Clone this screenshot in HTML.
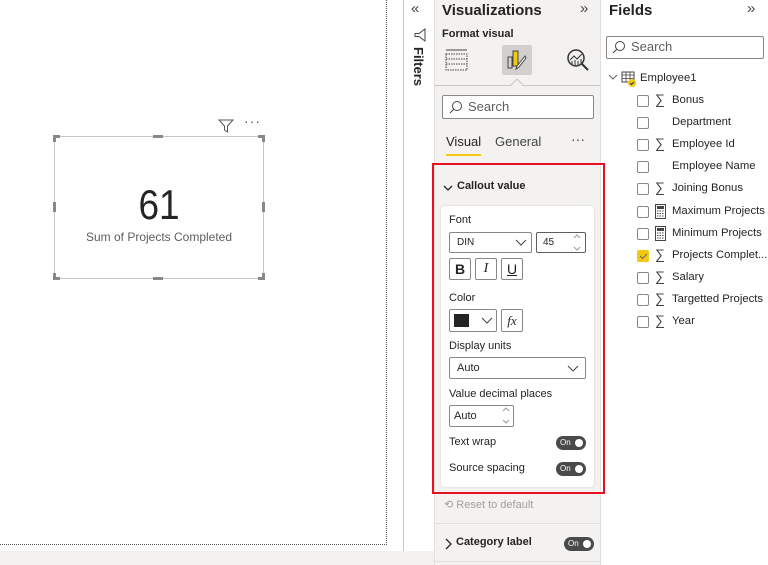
<!DOCTYPE html>
<html><head><meta charset="utf-8"><style>
*{box-sizing:border-box;margin:0;padding:0}
body{width:768px;height:565px;overflow:hidden;background:#fff;font-family:"Segoe UI","Liberation Sans",sans-serif;color:#252423;position:relative;font-size:12px}
.abs{position:absolute}
.cb{position:absolute;width:12px;height:12px;border:1px solid #8a8886;border-radius:2px;background:#fff}
.sig{position:absolute;font-size:14px;color:#444}
.fl{position:absolute;font-size:11.3px;color:#252423;white-space:nowrap}
.tog{position:absolute;width:30px;height:14px;border-radius:7px;background:#4a4a4a;color:#fff;font-size:8px;line-height:14px;padding-left:4px}
.tog:after{content:"";position:absolute;right:3px;top:3px;width:8px;height:8px;border-radius:50%;background:#fff}
.box{position:absolute;border:1px solid #8a8886;border-radius:2px;background:#fff}
.h{position:absolute;background:#8a8886}
</style></head><body>
<div class="abs" style="left:0;top:0;width:387px;height:545px;border-right:1px dotted #555;border-bottom:1px dotted #555"></div>
<div class="abs" style="left:0;top:551px;width:434px;height:14px;background:#f3f2f1"></div>
<div class="abs" style="left:403px;top:0;width:1px;height:551px;background:#c8c6c4"></div>
<div class="abs" style="left:54px;top:136px;width:210px;height:143px;border:1px solid #c8c6c4"></div>
<div class="h" style="left:53px;top:135px;width:7px;height:3px"></div><div class="h" style="left:53px;top:135px;width:3px;height:7px"></div>
<div class="h" style="left:258px;top:135px;width:7px;height:3px"></div><div class="h" style="left:262px;top:135px;width:3px;height:7px"></div>
<div class="h" style="left:53px;top:277px;width:7px;height:3px"></div><div class="h" style="left:53px;top:273px;width:3px;height:7px"></div>
<div class="h" style="left:258px;top:277px;width:7px;height:3px"></div><div class="h" style="left:262px;top:273px;width:3px;height:7px"></div>
<div class="h" style="left:153px;top:135px;width:10px;height:3px"></div><div class="h" style="left:153px;top:277px;width:10px;height:3px"></div>
<div class="h" style="left:53px;top:202px;width:3px;height:10px"></div><div class="h" style="left:262px;top:202px;width:3px;height:10px"></div>
<svg class="abs" style="left:218px;top:119px" width="16" height="14"><path d="M1 1H15L9.5 7V13L6.5 11V7Z" fill="none" stroke="#555" stroke-width="1"/></svg>
<div class="abs" style="left:244px;top:113px;font-size:14px;color:#555;letter-spacing:1px">···</div>
<div class="abs" style="left:54px;top:180px;width:210px;text-align:center;font-size:42px;line-height:50px;color:#252423;transform:scaleX(.88)">61</div>
<div class="abs" style="left:54px;top:230px;width:210px;text-align:center;font-size:12px;color:#605e5c">Sum of Projects Completed</div>
<div class="abs" style="left:411px;top:0;font-size:15px;color:#444">«</div>
<svg class="abs" style="left:413px;top:28px" width="14" height="14"><path d="M12 1V13L6 8.5H2V5.5H6Z" fill="none" stroke="#444"/></svg>
<div class="abs" style="left:411px;top:47px;writing-mode:vertical-rl;font-size:13px;font-weight:bold;color:#252423">Filters</div>
<div class="abs" style="left:434px;top:0;width:167px;height:565px;background:#f3f2f1;border-left:1px solid #e1dfdd;border-right:1px solid #e1dfdd"></div>
<div class="abs" style="left:442px;top:2px;font-size:15px;font-weight:600">Visualizations</div>
<div class="abs" style="left:580px;top:0;font-size:15px;color:#444">»</div>
<div class="abs" style="left:442px;top:28px;font-size:11px;font-weight:600">Format visual</div>
<svg class="abs" style="left:445px;top:48px" width="24" height="24"><rect x="1" y="6" width="21" height="16" fill="none" stroke="#444" stroke-dasharray="1.5 1"/><line x1="1" y1="2" x2="22" y2="2" stroke="#444"/><line x1="1" y1="11" x2="22" y2="11" stroke="#444" stroke-dasharray="1.5 1"/><line x1="1" y1="16" x2="22" y2="16" stroke="#444" stroke-dasharray="1.5 1"/></svg>
<div class="abs" style="left:502px;top:45px;width:30px;height:30px;background:#d2d0ce;border-radius:2px"></div>
<svg class="abs" style="left:505px;top:48px" width="24" height="24"><path d="M3 9H7V20H3Z" fill="none" stroke="#444"/><rect x="8" y="3" width="5" height="15" fill="#f2c811" stroke="#444"/><path d="M20 8L12 18L11 21L14 19L21 10Z" fill="#fff" stroke="#444"/></svg>
<svg class="abs" style="left:566px;top:48px" width="26" height="26"><circle cx="10" cy="10" r="8" fill="none" stroke="#333" stroke-width="1.5"/><path d="M4 12L8 8L11 11L16 6" fill="none" stroke="#333"/><path d="M6 13V17M9 12V18M12 13V18M15 11V16" stroke="#333"/><line x1="16" y1="16" x2="22" y2="22" stroke="#333" stroke-width="2"/></svg>
<div class="abs" style="left:435px;top:85px;width:165px;height:1px;background:#c8c6c4"></div>
<svg class="abs" style="left:510px;top:79px" width="14" height="8"><path d="M0 7L7 0L14 7" fill="#f3f2f1" stroke="#c8c6c4"/></svg>
<div class="box" style="left:442px;top:95px;width:152px;height:24px"></div>
<svg class="abs" style="left:449px;top:100px" width="14" height="14"><circle cx="8" cy="6" r="4.5" fill="none" stroke="#444"/><line x1="5" y1="9" x2="1" y2="13" stroke="#444"/></svg>
<div class="abs" style="left:468px;top:99px;font-size:13px;color:#605e5c">Search</div>
<div class="abs" style="left:446px;top:134px;font-size:13px">Visual</div>
<div class="abs" style="left:446px;top:154px;width:35px;height:2px;background:#f2c811"></div>
<div class="abs" style="left:495px;top:134px;font-size:13px;color:#444">General</div>
<div class="abs" style="left:571px;top:131px;font-size:14px;color:#444">···</div>
<div class="abs" style="left:432px;top:163px;width:173px;height:331px;border:2px solid #e81123"></div>
<svg class="abs" style="left:443px;top:184px" width="10" height="8"><path d="M1 2L5 6L9 2" fill="none" stroke="#252423" stroke-width="1.3"/></svg>
<div class="abs" style="left:457px;top:180px;font-size:11px;font-weight:600">Callout value</div>
<div class="abs" style="left:441px;top:206px;width:153px;height:281px;background:#fff;border-radius:4px;box-shadow:0 0 2px rgba(0,0,0,.15)"></div>
<div class="abs" style="left:449px;top:214px;font-size:11px">Font</div>
<div class="box" style="left:449px;top:232px;width:83px;height:21px;font-size:10px;line-height:19px;padding-left:7px">DIN</div>
<svg class="abs" style="left:515px;top:239px" width="12" height="8"><path d="M1 1L6 6L11 1" fill="none" stroke="#444"/></svg>
<div class="box" style="left:536px;top:232px;width:50px;height:21px;font-size:10px;line-height:19px;padding-left:6px;border-color:#605e5c">45</div>
<svg class="abs" style="left:573px;top:234px" width="8" height="17"><path d="M1 4L4 1L7 4M1 13L4 16L7 13" fill="none" stroke="#999"/></svg>
<div class="box" style="left:449px;top:258px;width:22px;height:22px;text-align:center;font-weight:bold;font-size:14px;line-height:20px">B</div>
<div class="box" style="left:475px;top:258px;width:22px;height:22px;text-align:center;font-style:italic;font-size:14px;line-height:20px;font-family:'Liberation Serif',serif">I</div>
<div class="box" style="left:501px;top:258px;width:22px;height:22px;text-align:center;text-decoration:underline;font-size:14px;line-height:20px">U</div>
<div class="abs" style="left:449px;top:292px;font-size:11px">Color</div>
<div class="box" style="left:449px;top:309px;width:48px;height:23px"></div>
<div class="abs" style="left:454px;top:314px;width:15px;height:13px;background:#252423"></div>
<svg class="abs" style="left:481px;top:317px" width="12" height="8"><path d="M1 1L6 6L11 1" fill="none" stroke="#444"/></svg>
<div class="box" style="left:501px;top:309px;width:22px;height:23px;text-align:center;font-style:italic;font-size:13px;line-height:21px;font-family:'Liberation Serif',serif">fx</div>
<div class="abs" style="left:449px;top:340px;font-size:11px">Display units</div>
<div class="box" style="left:449px;top:357px;width:137px;height:22px;font-size:11px;line-height:20px;padding-left:7px">Auto</div>
<svg class="abs" style="left:567px;top:365px" width="12" height="8"><path d="M1 1L6 6L11 1" fill="none" stroke="#444"/></svg>
<div class="abs" style="left:449px;top:388px;font-size:11px">Value decimal places</div>
<div class="box" style="left:449px;top:405px;width:65px;height:22px;font-size:11px;line-height:20px;padding-left:4px">Auto</div>
<svg class="abs" style="left:502px;top:407px" width="8" height="17"><path d="M1 4L4 1L7 4M1 13L4 16L7 13" fill="none" stroke="#999"/></svg>
<div class="abs" style="left:449px;top:436px;font-size:11px">Text wrap</div>
<div class="tog" style="left:556px;top:436px">On</div>
<div class="abs" style="left:449px;top:462px;font-size:11px">Source spacing</div>
<div class="tog" style="left:556px;top:462px">On</div>
<div class="abs" style="left:444px;top:498px;font-size:11px;color:#a19f9d">⟲ Reset to default</div>
<div class="abs" style="left:435px;top:523px;width:165px;height:1px;background:#e1dfdd"></div>
<svg class="abs" style="left:444px;top:538px" width="8" height="12"><path d="M2 1L7 6L2 11" fill="none" stroke="#252423" stroke-width="1.3"/></svg>
<div class="abs" style="left:456px;top:536px;font-size:11px;font-weight:600">Category label</div>
<div class="tog" style="left:564px;top:537px">On</div>
<div class="abs" style="left:435px;top:561px;width:165px;height:1px;background:#e1dfdd"></div>
<div class="abs" style="left:609px;top:2px;font-size:15px;font-weight:600">Fields</div>
<div class="abs" style="left:747px;top:0;font-size:15px;color:#444">»</div>
<div class="box" style="left:606px;top:36px;width:158px;height:23px"></div>
<svg class="abs" style="left:612px;top:40px" width="14" height="14"><circle cx="8" cy="6" r="4.5" fill="none" stroke="#444"/><line x1="5" y1="9" x2="1" y2="13" stroke="#444"/></svg>
<div class="abs" style="left:631px;top:39px;font-size:13px;color:#605e5c">Search</div>
<svg class="abs" style="left:608px;top:74px" width="10" height="8"><path d="M1 1L5 5L9 1" fill="none" stroke="#666"/></svg>
<svg class="abs" style="left:621px;top:71px" width="16" height="18"><rect x="1" y="1" width="12" height="10" fill="none" stroke="#444"/><path d="M1 4H13M1 7.5H13M5 1V11M9 1V11" stroke="#444" stroke-width=".8"/><circle cx="11" cy="12" r="4" fill="#f2c811"/><path d="M9 12L10.5 13.5L13 11" fill="none" stroke="#333"/></svg>
<div class="fl" style="left:640px;top:72px">Employee1</div>
<div class="cb" style="left:637px;top:95px"></div><div class="sig" style="left:655px;top:91px">∑</div><div class="fl" style="left:672px;top:94px">Bonus</div>
<div class="cb" style="left:637px;top:117px"></div><div class="fl" style="left:672px;top:116px">Department</div>
<div class="cb" style="left:637px;top:139px"></div><div class="sig" style="left:655px;top:135px">∑</div><div class="fl" style="left:672px;top:138px">Employee Id</div>
<div class="cb" style="left:637px;top:161px"></div><div class="fl" style="left:672px;top:160px">Employee Name</div>
<div class="cb" style="left:637px;top:183px"></div><div class="sig" style="left:655px;top:179px">∑</div><div class="fl" style="left:672px;top:182px">Joining Bonus</div>
<div class="cb" style="left:637px;top:206px"></div><svg class="abs" style="left:655px;top:204px" width="11" height="15"><rect x=".5" y=".5" width="10" height="14" fill="none" stroke="#444"/><rect x="2" y="2" width="7" height="3" fill="#444"/><path d="M2 7H9M2 9.5H9M2 12H9" stroke="#444" stroke-dasharray="1.5 1"/></svg><div class="fl" style="left:672px;top:205px">Maximum Projects</div>
<div class="cb" style="left:637px;top:228px"></div><svg class="abs" style="left:655px;top:226px" width="11" height="15"><rect x=".5" y=".5" width="10" height="14" fill="none" stroke="#444"/><rect x="2" y="2" width="7" height="3" fill="#444"/><path d="M2 7H9M2 9.5H9M2 12H9" stroke="#444" stroke-dasharray="1.5 1"/></svg><div class="fl" style="left:672px;top:227px">Minimum Projects</div>
<div class="cb" style="left:637px;top:250px;background:#f2c811;border-color:#f2c811"></div><svg class="abs" style="left:639px;top:253px" width="9" height="7"><path d="M1 3L3.5 5.5L8 1" fill="none" stroke="#666"/></svg><div class="sig" style="left:655px;top:246px">∑</div><div class="fl" style="left:672px;top:249px">Projects Complet...</div>
<div class="cb" style="left:637px;top:272px"></div><div class="sig" style="left:655px;top:268px">∑</div><div class="fl" style="left:672px;top:271px">Salary</div>
<div class="cb" style="left:637px;top:294px"></div><div class="sig" style="left:655px;top:290px">∑</div><div class="fl" style="left:672px;top:293px">Targetted Projects</div>
<div class="cb" style="left:637px;top:316px"></div><div class="sig" style="left:655px;top:312px">∑</div><div class="fl" style="left:672px;top:315px">Year</div>
</body></html>
